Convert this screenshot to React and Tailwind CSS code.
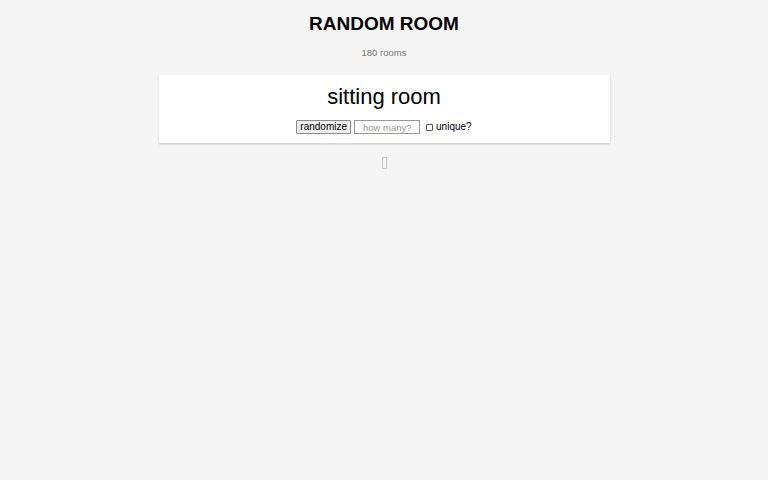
export default function App() {
  return (
    <div className="min-h-[480px] bg-[#f5f5f5] font-['Liberation_Sans',Arial,sans-serif] text-black">
      <div className="flex flex-col items-center pt-[13px]">
        <h1 className="text-[19px] font-bold leading-[22px]">RANDOM ROOM</h1>
        <p className="mt-[12px] text-[9.5px] leading-[12px] text-[#777]">180 rooms</p>

        <div className="mt-[16px] flex w-[451px] flex-col items-center bg-white pt-[9px] pb-[9px] shadow-[0_1px_2px_rgba(0,0,0,0.18)]">
          <div className="text-[22px] leading-[26px]">sitting room</div>
          <div className="mt-[10px] flex items-center text-[10px] leading-[12px]">
            <button className="h-[14px] rounded-[1px] border border-[#8a8a8a] bg-[#efefef] px-[3px] text-[10px] leading-[12px] text-black">
              randomize
            </button>
            <input
              className="ml-[3px] h-[14px] w-[66px] border border-[#999] bg-white pl-[8px] pr-[4px] text-[9.5px] leading-[12px] outline-none placeholder:text-[#999]"
              placeholder="how many?"
            />
            <span className="ml-[6px] h-[7px] w-[7px] rounded-[1px] border border-[#555] bg-white" />
            <span className="ml-[3px]">unique?</span>
          </div>
        </div>

        <div className="mt-[14px] h-[12px] w-[5px] border border-[#c8c8c8]" />
      </div>
    </div>
  );
}
